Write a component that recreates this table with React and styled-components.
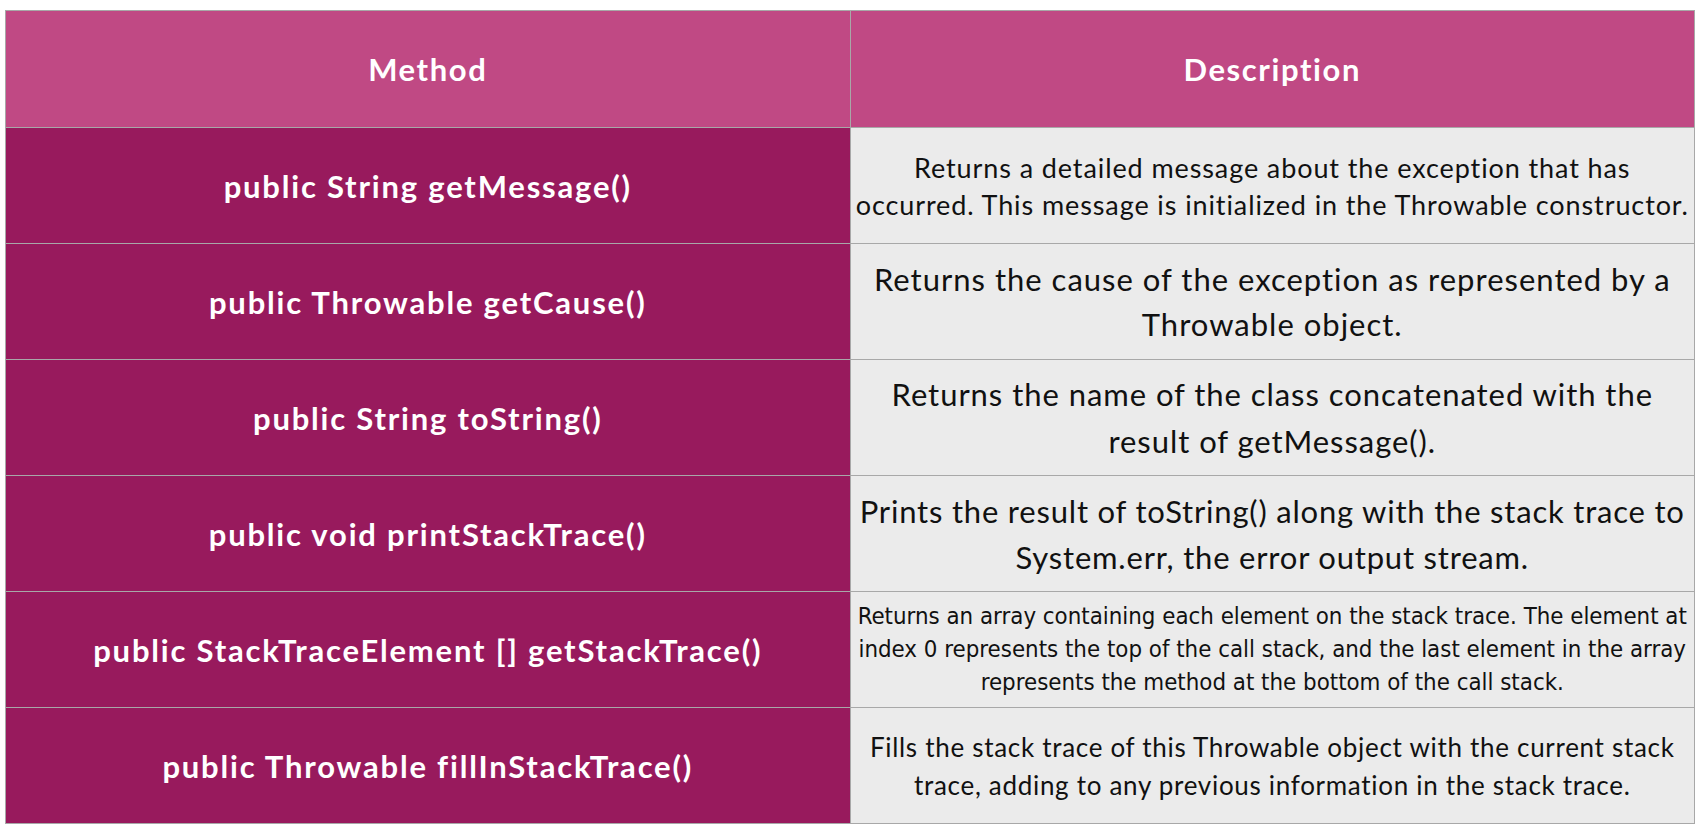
import styled, { createGlobalStyle } from "styled-components"

const GlobalStyle = createGlobalStyle`
    html, body {
        margin: 0;
        padding: 0;
        background: #ffffff;
    }
    body {
        font-family: Lato, "Open Sans", sans-serif;
    }
`

const Page = styled.main`
    padding: 10px 12px 0 5px;
`

const Table = styled.table`
    width: 1690px;
    border-collapse: collapse;
    table-layout: fixed;
    border: 1px solid #a8a8a8;
`

const HeadCell = styled.th`
    height: 116px;
    padding: 0;
    background: #c04984;
    color: #ffffff;
    font-size: 31px;
    font-weight: 700;
    letter-spacing: 1.6px;
    border: 1px solid #a8a8a8;
    text-align: center;
    vertical-align: middle;
`

const MethodCell = styled.td`
    height: 115px;
    padding: 0 4px;
    background: #981a5d;
    color: #ffffff;
    font-size: 31px;
    font-weight: 700;
    letter-spacing: 1.8px;
    border: 1px solid #a8a8a8;
    text-align: center;
    vertical-align: middle;
`

const DescCell = styled.td`
    height: 115px;
    padding: 0 2px;
    background: #ebebeb;
    color: #111111;
    font-size: ${p => p.$size}px;
    line-height: ${p => p.$lh}px;
    letter-spacing: ${p => p.$ls}px;
    font-stretch: ${p => (p.$narrow ? "condensed" : "normal")};
    font-family: ${p => (p.$narrow ? '"DejaVu Sans", sans-serif' : "Lato, sans-serif")};
    border: 1px solid #a8a8a8;
    text-align: center;
    vertical-align: middle;
`

const rows = [
    {
        method: "public String getMessage()",
        desc: ["Returns a detailed message about the exception that has", "occurred. This message is initialized in the Throwable constructor."],
        size: 27, lh: 37, ls: 0.9
    },
    {
        method: "public Throwable getCause()",
        desc: ["Returns the cause of the exception as represented by a", "Throwable object."],
        size: 31, lh: 45, ls: 1
    },
    {
        method: "public String toString()",
        desc: ["Returns the name of the class concatenated with the", "result of getMessage()."],
        size: 31, lh: 47, ls: 0.95
    },
    {
        method: "public void printStackTrace()",
        desc: ["Prints the result of toString() along with the stack trace to", "System.err, the error output stream."],
        size: 31, lh: 46, ls: 0.8
    },
    {
        method: "public StackTraceElement [] getStackTrace()",
        desc: [
            "Returns an array containing each element on the stack trace. The element at",
            "index 0 represents the top of the call stack, and the last element in the array",
            "represents the method at the bottom of the call stack."
        ],
        size: 23.8, lh: 33, ls: 0, narrow: true
    },
    {
        method: "public Throwable fillInStackTrace()",
        desc: ["Fills the stack trace of this Throwable object with the current stack", "trace, adding to any previous information in the stack trace."],
        size: 26, lh: 38, ls: 0.7
    }
]

export default function App() {
    return (
        <Page>
            <GlobalStyle />
            <Table>
                <thead>
                    <tr>
                        <HeadCell>Method</HeadCell>
                        <HeadCell>Description</HeadCell>
                    </tr>
                </thead>
                <tbody>
                    {rows.map((row, i) => (
                        <tr key={i}>
                            <MethodCell>{row.method}</MethodCell>
                            <DescCell $size={row.size} $lh={row.lh} $ls={row.ls} $narrow={row.narrow}>
                                {row.desc.map((line, j) => (
                                    <div key={j}>{line}</div>
                                ))}
                            </DescCell>
                        </tr>
                    ))}
                </tbody>
            </Table>
        </Page>
    )
}
